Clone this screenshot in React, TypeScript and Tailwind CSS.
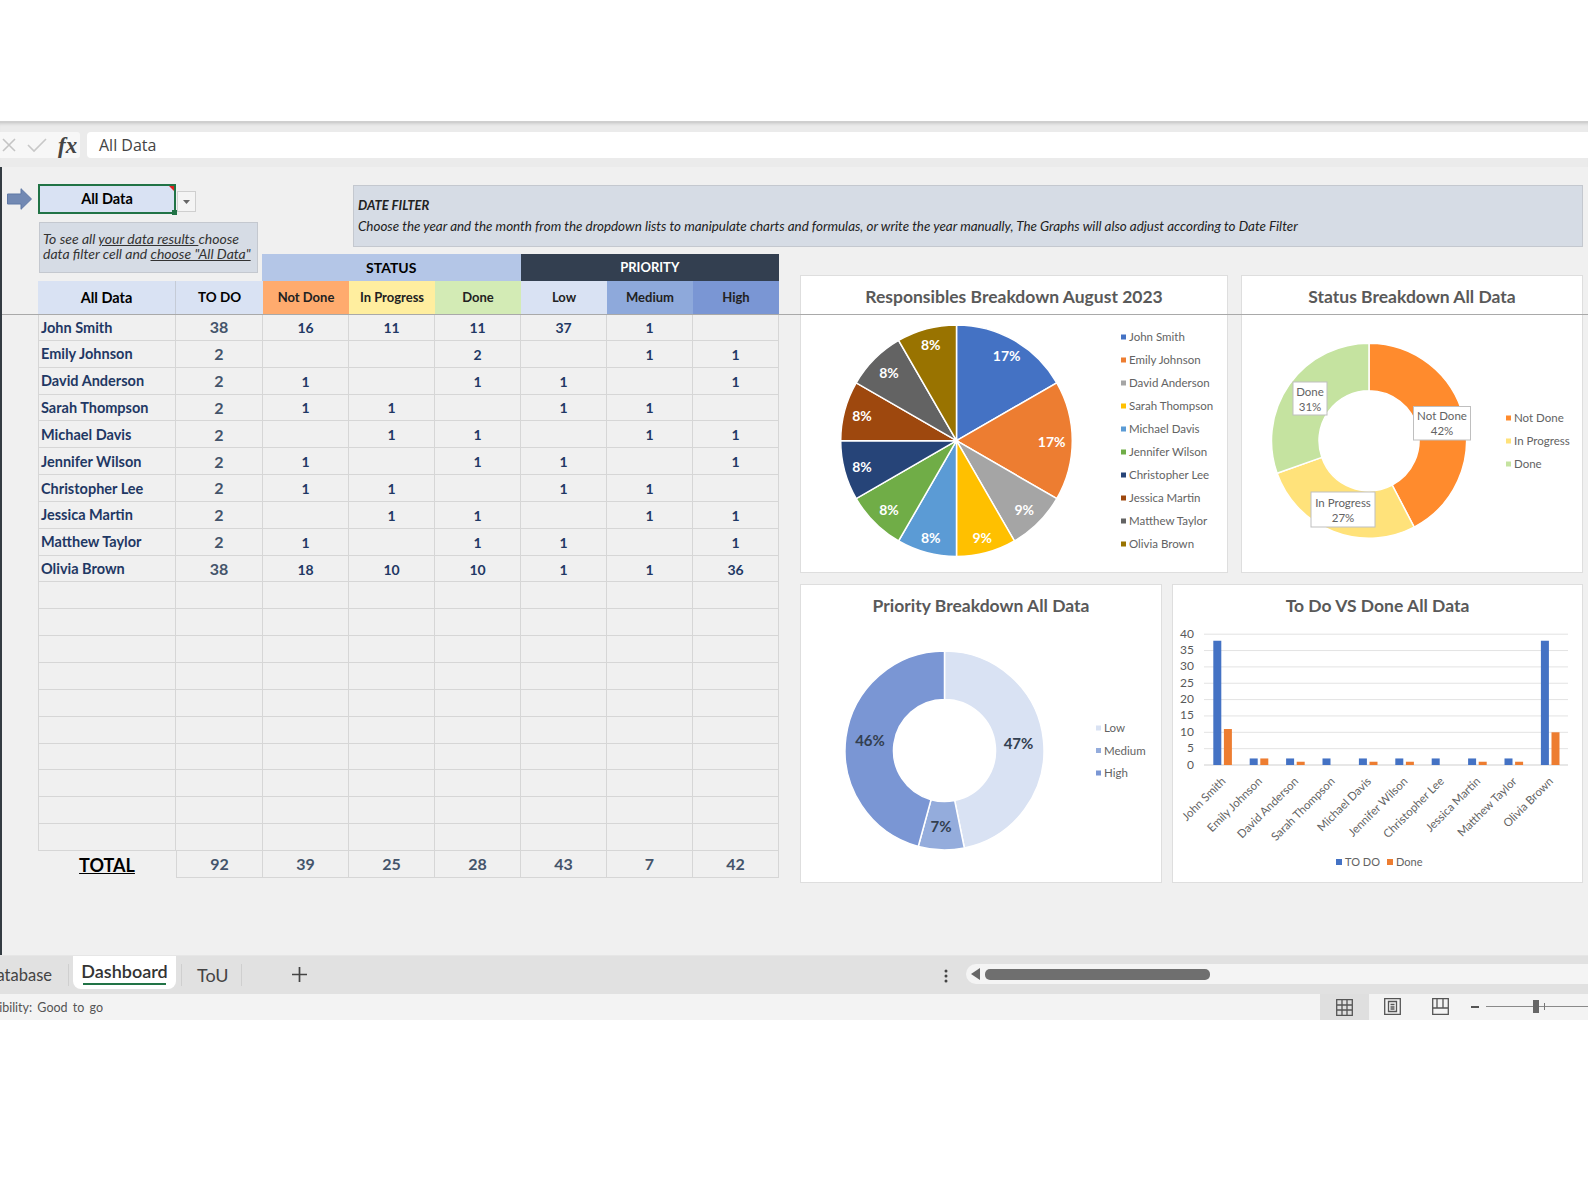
import React from "react";

const rows: (string | number)[][] = [
  ["John Smith", 38, 16, 11, 11, 37, 1, ""],
  ["Emily Johnson", 2, "", "", 2, "", 1, 1],
  ["David Anderson", 2, 1, "", 1, 1, "", 1],
  ["Sarah Thompson", 2, 1, 1, "", 1, 1, ""],
  ["Michael Davis", 2, "", 1, 1, "", 1, 1],
  ["Jennifer Wilson", 2, 1, "", 1, 1, "", 1],
  ["Christopher Lee", 2, 1, 1, "", 1, 1, ""],
  ["Jessica Martin", 2, "", 1, 1, "", 1, 1],
  ["Matthew Taylor", 2, 1, "", 1, 1, "", 1],
  ["Olivia Brown", 38, 18, 10, 10, 1, 1, 36],
];
const names = rows.map((r) => r[0] as string);
const todo = [38, 2, 2, 2, 2, 2, 2, 2, 2, 38];
const done = [11, 2, 1, 0, 1, 1, 0, 1, 1, 10];
const totals = [92, 39, 25, 28, 43, 7, 42];

function wedge(cx: number, cy: number, r: number, ir: number, a0: number, a1: number) {
  const p = (rad: number, a: number) => {
    const t = ((a - 90) * Math.PI) / 180;
    return `${(cx + rad * Math.cos(t)).toFixed(2)} ${(cy + rad * Math.sin(t)).toFixed(2)}`;
  };
  const large = a1 - a0 > 180 ? 1 : 0;
  if (ir === 0) return `M${cx} ${cy}L${p(r, a0)}A${r} ${r} 0 ${large} 1 ${p(r, a1)}Z`;
  return `M${p(ir, a0)}L${p(r, a0)}A${r} ${r} 0 ${large} 1 ${p(r, a1)}L${p(ir, a1)}A${ir} ${ir} 0 ${large} 0 ${p(ir, a0)}Z`;
}

function Panel({ title, x, y, w, h, children }: { title: string; x: number; y: number; w: number; h: number; children: React.ReactNode }) {
  return (
    <div className="flex flex-col bg-white border border-[#dedede] overflow-hidden" style={{ width: w, height: h }}>
      <div className="h-[43px] shrink-0 flex items-center justify-center text-[17.5px] font-bold text-[#595959]">{title}</div>
      <svg width={w - 2} height={h - 45} viewBox={`${x} ${y + 43} ${w - 2} ${h - 45}`} className="font-['Lato',sans-serif]">
        {children}
      </svg>
    </div>
  );
}

function Legend({ x, y, step, items }: { x: number; y: number; step: number; items: [string, string][] }) {
  return (
    <g>
      {items.map(([n, c], i) => (
        <g key={n}>
          <rect x={x} y={y + i * step - 2.5} width={5} height={5} fill={c} />
          <text x={x + 8} y={y + i * step + 4} fontSize={11.5} fill="#636363">{n}</text>
        </g>
      ))}
    </g>
  );
}

function PieChart() {
  const cols = ["#4472C4", "#ED7D31", "#A5A5A5", "#FFC000", "#5B9BD5", "#70AD47", "#264478", "#9E480E", "#636363", "#997300"];
  const angles = [0, 60, 120, 150, 180, 210, 240, 270, 300, 330, 360];
  const labels: [string, number, number][] = [
    ["17%", 1006.7, 355.7], ["17%", 1051.7, 441.7], ["9%", 1024.3, 510], ["9%", 982.3, 538.3], ["8%", 930.7, 538.3],
    ["8%", 889, 510], ["8%", 862, 466.7], ["8%", 862, 415.7], ["8%", 889, 373.3], ["8%", 930.7, 345],
  ];
  return (
    <Panel title="Responsibles Breakdown August 2023" x={801} y={276} w={428} h={298}>
      {cols.map((c, i) => (
        <path key={c} d={wedge(956.5, 440.7, 115.8, 0, angles[i], angles[i + 1])} fill={c} stroke="#fff" strokeWidth={1.5} />
      ))}
      {labels.map(([t, x, y], i) => (
        <text key={i} x={x} y={y + 5} textAnchor="middle" fontSize={14} fontWeight={700} fill="#fff">{t}</text>
      ))}
      <Legend x={1121} y={337} step={23} items={names.map((n, i) => [n, cols[i]] as [string, string])} />
    </Panel>
  );
}

function StatusChart() {
  const box = (x: number, y: number, w: number, h: number, a: string, b: string) => (
    <g>
      <rect x={x} y={y} width={w} height={h} fill="#fff" stroke="#bfbfbf" />
      <text x={x + w / 2} y={y + h / 2 - 3} textAnchor="middle" fontSize={11.5} fill="#636363">{a}</text>
      <text x={x + w / 2} y={y + h / 2 + 12} textAnchor="middle" fontSize={11.5} fill="#636363">{b}</text>
    </g>
  );
  return (
    <Panel title="Status Breakdown All Data" x={1241} y={276} w={342} h={298}>
      <path d={wedge(1368, 440.7, 97.5, 50, 0, 152.4)} fill="#FF8B2D" stroke="#fff" strokeWidth={1.5} />
      <path d={wedge(1368, 440.7, 97.5, 50, 152.4, 250.5)} fill="#FFE27A" stroke="#fff" strokeWidth={1.5} />
      <path d={wedge(1368, 440.7, 97.5, 50, 250.5, 360)} fill="#C5E3A0" stroke="#fff" strokeWidth={1.5} />
      {box(1412.5, 406.5, 57, 33.5, "Not Done", "42%")}
      {box(1310, 492, 64, 35, "In Progress", "27%")}
      {box(1292, 382, 34, 33, "Done", "31%")}
      <Legend x={1505} y={418} step={23} items={[["Not Done", "#FF8B2D"], ["In Progress", "#FFE27A"], ["Done", "#C5E3A0"]]} />
    </Panel>
  );
}

function PriorityChart() {
  const lab = (t: string, x: number, y: number) => (
    <text x={x} y={y + 5} textAnchor="middle" fontSize={15} fontWeight={700} fill="#333F50">{t}</text>
  );
  return (
    <Panel title="Priority Breakdown All Data" x={802} y={585} w={362} h={299}>
      <path d={wedge(945.5, 750.5, 99.5, 51, 0, 168.5)} fill="#D9E2F3" stroke="#fff" strokeWidth={1.5} />
      <path d={wedge(945.5, 750.5, 99.5, 51, 168.5, 195.3)} fill="#94ACDC" stroke="#fff" strokeWidth={1.5} />
      <path d={wedge(945.5, 750.5, 99.5, 51, 195.3, 360)} fill="#7A96D4" stroke="#fff" strokeWidth={1.5} />
      {lab("47%", 1019.5, 744)}
      {lab("46%", 871, 741)}
      {lab("7%", 942, 826.7)}
      <Legend x={1097} y={728} step={22.5} items={[["Low", "#D9E2F3"], ["Medium", "#94ACDC"], ["High", "#7A96D4"]]} />
    </Panel>
  );
}

function BarChart() {
  const y0 = 765;
  const unit = 3.27;
  return (
    <Panel title="To Do VS Done All Data" x={1173} y={585} w={411} h={299}>
      {[0, 5, 10, 15, 20, 25, 30, 35, 40].map((v) => (
        <g key={v}>
          <line x1={1204} x2={1568} y1={y0 - v * unit} y2={y0 - v * unit} stroke={v === 0 ? "#cfcfcf" : "#e3e3e3"} />
          <text x={1194} y={y0 - v * unit + 3.5} textAnchor="end" fontSize={12} fill="#595959">{v}</text>
        </g>
      ))}
      {names.map((n, i) => {
        const x = 1213.3 + i * 36.4;
        return (
          <g key={n}>
            <rect x={x} y={y0 - todo[i] * unit} width={8} height={todo[i] * unit} fill="#4472C4" />
            {done[i] > 0 && <rect x={x + 10.6} y={y0 - done[i] * unit} width={8} height={done[i] * unit} fill="#ED7D31" />}
            <text transform={`rotate(-45 ${x + 13} 782)`} x={x + 13} y={782} textAnchor="end" fontSize={11.5} fill="#636363">{n}</text>
          </g>
        );
      })}
      <rect x={1336} y={859} width={6} height={6} fill="#4472C4" />
      <text x={1345} y={866} fontSize={11} fill="#636363">TO DO</text>
      <rect x={1387} y={859} width={6} height={6} fill="#ED7D31" />
      <text x={1396} y={866} fontSize={11} fill="#636363">Done</text>
    </Panel>
  );
}

const cell = "flex items-center justify-center border-r border-b border-[#d6d6d6] pt-px";

function DataTable() {
  const empty = Array.from({ length: 10 });
  return (
    <div className="grid grid-cols-[138px_87px_repeat(6,1fr)] grid-rows-[33px] auto-rows-[26.85px] text-[14px] font-bold">
      <div className="flex items-center justify-center bg-[#D9E2F3] border-r border-[#c5cbd6] text-[14.5px] text-black">All Data</div>
      <div className="flex items-center justify-center bg-[#D9E2F3] text-[13.5px] text-black">TO DO</div>
      <div className="flex items-center justify-center bg-[#FFAB6E] text-[13px] text-[#222]">Not Done</div>
      <div className="flex items-center justify-center bg-[#FFEE9F] text-[13px] text-[#222]">In Progress</div>
      <div className="flex items-center justify-center bg-[#D3EBB5] text-[13px] text-[#222]">Done</div>
      <div className="flex items-center justify-center bg-[#D9E2F3] text-[13px] text-[#222]">Low</div>
      <div className="flex items-center justify-center bg-[#8EA9DB] text-[13px] text-[#222]">Medium</div>
      <div className="flex items-center justify-center bg-[#7A96D4] text-[13px] text-[#222]">High</div>
      {rows.map((r) =>
        r.map((v, i) =>
          i === 0 ? (
            <div key={i} className="flex items-center pl-[2px] pt-px border-l border-r border-b border-[#d6d6d6] text-[#1F3864] text-[14.5px]">{v}</div>
          ) : (
            <div key={i} className={`${cell} ${i === 1 ? "text-[#44546A] text-[16px]" : "text-[#1F3864]"}`}>{v}</div>
          )
        )
      )}
      {empty.map((_, k) =>
        Array.from({ length: 8 }).map((_, i) => (
          <div key={`${k}-${i}`} className={`${cell} ${i === 0 ? "border-l" : ""}`} />
        ))
      )}
      <div className="flex items-center justify-center pt-[3px] text-[18px] text-black underline">TOTAL</div>
      {totals.map((t, i) => (
        <div key={i} className={`${cell} ${i === 0 ? "border-l" : ""} text-[#44546A] text-[16px]`}>{t}</div>
      ))}
    </div>
  );
}

export default function App() {
  return (
    <div className="w-[1588px] h-[1191px] bg-white overflow-hidden font-['Lato',sans-serif] flex flex-col">
      <div className="h-[121px] shrink-0" />
      <div className="h-[46px] shrink-0 bg-[#ebebeb] border-t-2 border-[#cfcfcf] flex items-start pt-[9px] shadow-[inset_0_3px_3px_-2px_#d0d0d0]">
        <div className="w-[80px] h-[26px] bg-[#f7f7f7] rounded-r-[3px] flex items-center pl-[1px]">
          <svg width="16" height="16" viewBox="0 0 16 16" fill="none" stroke="#c4c4c4" strokeWidth="1.6"><path d="M2 2 14 14M14 2 2 14" /></svg>
          <svg width="22" height="16" viewBox="0 0 22 16" fill="none" stroke="#c8c8c8" strokeWidth="1.6" className="ml-[9px]"><path d="M2 8 8 14 20 2" /></svg>
          <span className="ml-[10px] text-[23px] leading-none italic font-bold font-['Liberation_Serif',serif] text-[#444]">fx</span>
        </div>
        <div className="ml-[7px] flex-1 h-[26px] bg-white rounded-l-[4px] flex items-center pl-[12px] text-[16px] text-[#444] font-['Open_Sans',sans-serif]">All Data</div>
      </div>

      <div className="relative h-[788px] shrink-0 bg-[#f0f0f0] border-l-2 border-[#333b42] pl-[5px] pr-[5px] pt-[17px] grid grid-cols-[31px_224px_517px_1fr] grid-rows-[70px_27px_auto] content-start">
        <div className="col-start-1 row-start-1 pt-[4px]">
          <svg width="25" height="22" viewBox="0 0 25 22"><path d="M0.5 6H14V0.7L24.5 11 14 21.3V16H0.5Z" fill="#7289B3" stroke="#5f78a5" /></svg>
        </div>

        <div className="col-start-2 row-start-1 row-span-2">
          <div className="flex items-start">
            <div className="relative w-[138px] h-[30px] bg-[#D9E2F3] border-2 border-[#217346] flex items-center justify-center text-[14.5px] font-bold text-black">
              All Data
              <svg width="5" height="5" viewBox="0 0 5 5" className="absolute top-0 right-0"><path d="M0 0H5V5Z" fill="#e02020" /></svg>
              <span className="absolute -right-[3px] -bottom-[3px] w-[5px] h-[5px] bg-[#217346]" />
            </div>
            <div className="mt-[7px] ml-[1px] w-[19px] h-[21px] bg-[#f4f4f4] border border-[#cfcfcf] flex items-center justify-center">
              <svg width="7" height="4" viewBox="0 0 7 4"><path d="M0 0H7L3.5 4Z" fill="#666" /></svg>
            </div>
          </div>
          <div className="mt-[8px] ml-[1px] w-[219px] h-[51px] bg-[#D6DCE5] border border-[#c4c8cf] pl-[3px] pt-[9px] text-[14px] leading-[14.5px] italic text-[#333] whitespace-nowrap">
            To see all <span className="underline">your data results </span>choose<br />data filter cell and <span className="underline">choose "All Data"</span>
          </div>
        </div>

        <div className="col-start-3 col-span-2 row-start-1 pl-[91px] pt-[1px]">
          <div className="h-[62px] bg-[#D6DCE5] border border-[#c4c8cf] pl-[4px] pt-[9px] text-[13.4px] leading-[21px] italic text-[#222]">
            <div className="font-bold text-[13px]">DATE FILTER</div>
            <div>Choose the year and the month from the dropdown lists to manipulate charts and formulas, or write the year manually, The Graphs will also adjust according to Date Filter</div>
          </div>
        </div>

        <div className="col-start-3 row-start-2 grid grid-cols-2 font-bold">
          <div className="bg-[#B4C6E7] flex items-center justify-center text-[14px] text-black">STATUS</div>
          <div className="bg-[#333F50] flex items-center justify-center text-[13px] text-white">PRIORITY</div>
        </div>

        <div className="col-start-2 col-span-2 row-start-3">
          <DataTable />
        </div>

        <div className="col-start-4 row-start-2 row-span-2 pl-[21px] pt-[21px] flex flex-col gap-[11px]">
          <div className="flex gap-[13px]">
            <PieChart />
            <StatusChart />
          </div>
          <div className="flex gap-[10px]">
            <PriorityChart />
            <BarChart />
          </div>
        </div>

        <div className="absolute left-0 right-0 top-[147px] h-px bg-[#a9a9a9]" />
      </div>

      <div className="h-[39px] shrink-0 bg-[#e1e1e1] border-t border-[#e6e6e6] flex items-start text-[#444] text-[18px]">
        <div className="w-[52px] h-[38px] overflow-hidden flex justify-end items-center whitespace-nowrap text-[16.5px]">Database</div>
        <div className="ml-[16px] mt-[8px] w-px h-[22px] bg-[#cfcfcf]" />
        <div className="ml-[4px] w-[103px] h-[33px] bg-white rounded-b-[8px] flex flex-col items-center pt-[3px]">
          <span className="text-[18px] leading-[24px] font-semibold text-[#333]">Dashboard</span>
          <span className="w-[83px] h-[2px] bg-[#217346]" />
        </div>
        <div className="ml-[5px] mt-[8px] w-px h-[22px] bg-[#cfcfcf]" />
        <div className="ml-[15px] w-[30px] h-[38px] flex items-center">ToU</div>
        <div className="ml-[14px] mt-[8px] w-px h-[22px] bg-[#cfcfcf]" />
        <svg width="15" height="15" viewBox="0 0 15 15" className="ml-[50px] mt-[11px]" stroke="#444" strokeWidth="1.7"><path d="M7.5 0V15M0 7.5H15" /></svg>
        <svg width="4" height="14" viewBox="0 0 4 14" className="ml-[637px] mt-[13px]" fill="#444"><circle cx="2" cy="2" r="1.5" /><circle cx="2" cy="7" r="1.5" /><circle cx="2" cy="12" r="1.5" /></svg>
        <div className="ml-[18px] mt-[8px] flex-1 h-[20px] bg-[#f4f4f4] rounded-l-[10px] flex items-center pl-[5px]">
          <svg width="9" height="12" viewBox="0 0 9 12" fill="#666"><path d="M9 0V12L0 6Z" /></svg>
          <div className="ml-[5px] w-[225px] h-[11px] rounded-[5px] bg-[#6f6f6f]" />
        </div>
      </div>

      <div className="h-[26px] shrink-0 bg-[#f3f3f3] flex items-start text-[12.5px] [word-spacing:2px] text-[#555]">
        <div className="w-[103px] h-[26px] pt-[2px] overflow-hidden flex justify-end items-center whitespace-nowrap">Accessibility: Good to go</div>
        <div className="ml-[1217px] w-[49px] h-[26px] bg-[#dfdfdf] flex items-center justify-center">
          <svg width="17" height="17" viewBox="0 0 17 17" fill="none" stroke="#555" strokeWidth="1.3"><path d="M.7.7H16.3V16.3H.7ZM.7 6H16.3M.7 11H16.3M6 .7V16.3M11 .7V16.3" /></svg>
        </div>
        <svg width="17" height="17" viewBox="0 0 17 17" fill="none" stroke="#555" strokeWidth="1.3" className="ml-[15px] mt-[4px]"><path d="M.7.7H16.3V16.3H.7ZM4.5 3.5H12.5V13.5H4.5ZM6.5 6.5H10.5M6.5 9H10.5M6.5 11H10.5" /></svg>
        <svg width="17" height="17" viewBox="0 0 17 17" fill="none" stroke="#555" strokeWidth="1.3" className="ml-[31px] mt-[4px]"><path d="M.7.7H16.3V16.3H.7ZM.7 10H16.3M5 .7V10M11 .7V10" /></svg>
        <div className="ml-[22px] mt-[12px] w-[8px] h-[2px] bg-[#555]" />
        <div className="ml-[7px] mt-[12px] flex-1 h-px bg-[#8a8a8a] relative">
          <span className="absolute left-[47px] -top-[6px] w-[6px] h-[13px] bg-[#666]" />
          <span className="absolute left-[58px] -top-[3px] w-px h-[7px] bg-[#777]" />
        </div>
      </div>
      <div className="flex-1 bg-white" />
    </div>
  );
}
